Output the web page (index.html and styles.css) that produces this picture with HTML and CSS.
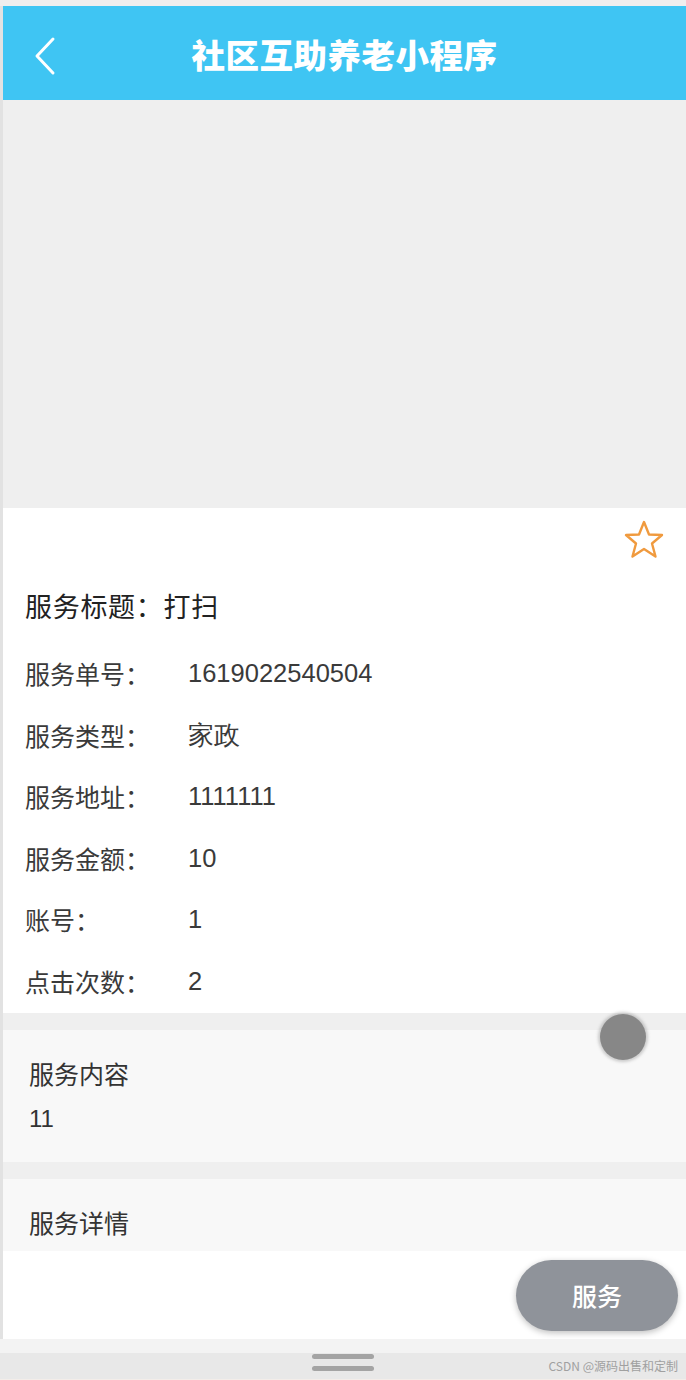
FILE: index.html
```html
<!doctype html>
<html>
<head>
<meta charset="UTF-8">
<title>社区互助养老小程序</title>
	<link rel="stylesheet" href="styles.css">
</head>

<body>
	<div class="page">
		<div class="header">
			<svg class="back" width="24" height="40" viewBox="0 0 24 40">
				<polyline points="20,3 4,20 20,37" fill="none" stroke="#ffffff" stroke-width="3" stroke-linecap="round" stroke-linejoin="round"/>
			</svg>
			<h1>社区互助养老小程序</h1>
		</div>

		<div class="banner"></div>

		<div class="info">
			<div class="star-row">
				<svg width="42" height="42" viewBox="0 0 42 42">
					<polygon points="21,3 26,15.5 39,16 29,24.5 32.5,37.5 21,30 9.5,37.5 13,24.5 3,16 16,15.5" fill="none" stroke="#f09a3e" stroke-width="2.4" stroke-linejoin="round"/>
				</svg>
			</div>
			<div class="title">服务标题：打扫</div>
			<div class="row"><span class="label">服务单号：</span><span class="value">1619022540504</span></div>
			<div class="row"><span class="label">服务类型：</span><span class="value">家政</span></div>
			<div class="row"><span class="label">服务地址：</span><span class="value">1111111</span></div>
			<div class="row"><span class="label">服务金额：</span><span class="value">10</span></div>
			<div class="row"><span class="label">账号：</span><span class="value">1</span></div>
			<div class="row"><span class="label">点击次数：</span><span class="value">2</span></div>
		</div>

		<div class="gap"></div>

		<div class="section">
			<div class="section-title">服务内容</div>
			<div class="section-text">11</div>
			<div class="dot"></div>
		</div>

		<div class="gap"></div>

		<div class="section details">
			<div class="section-title">服务详情</div>
		</div>

		<div class="actions">
			<div class="btn">服务</div>
		</div>
	</div>

	<div class="bottom-bar">
		<div class="handle"><span></span><span></span></div>
		<div class="mark">CSDN @源码出售和定制</div>
	</div>
</body>
</html>
```

FILE: styles.css
```css
body {
	margin: 0;
	background-color: #f0eeee;
	font-family: "Liberation Sans", "Noto Sans CJK SC", sans-serif;
	color: #333333;
}

.page {
	margin-top: 6px;
	border-left: 3px solid #e2e2e2;
	display: flex;
	flex-direction: column;
}

.header {
	height: 94px;
	background-color: #3fc5f3;
	display: flex;
	align-items: center;
	position: relative;
}

.back {
	position: absolute;
	left: 30px;
	top: 30px;
}

.header h1 {
	flex: 1;
	margin: 0;
	text-align: center;
	color: #ffffff;
	font-family: "Noto Sans CJK SC", sans-serif;
	font-weight: 900;
	font-size: 33.5px;
	letter-spacing: 0.5px;
}

.banner {
	height: 408px;
	background-color: #efefef;
}

.info {
	background-color: #ffffff;
	padding: 12px 0 0 22px;
}

.star-row {
	display: flex;
	justify-content: flex-end;
	padding-right: 21px;
	height: 40px;
	margin-top: -1px;
}

.title {
	margin-top: 16px;
	height: 68px;
	line-height: 62px;
	font-size: 27px;
	letter-spacing: 0.7px;
	color: #222222;
	font-family: "Noto Sans CJK SC", sans-serif;
}

.row {
	display: flex;
	height: 61.6px;
	line-height: 61.6px;
	font-size: 25px;
	font-family: "Noto Sans CJK SC", sans-serif;
	color: #3a3a3a;
}

.label {
	width: 163px;
}

.value {
	font-family: "Liberation Sans", sans-serif;
	font-size: 25.5px;
}

.gap {
	height: 17px;
	background-color: #efefef;
}

.section {
	background-color: #f8f8f8;
	padding: 26px 26px 26px;
	position: relative;
	font-family: "Noto Sans CJK SC", sans-serif;
	font-size: 25px;
}

.section-title {
	line-height: 34px;
	color: #333333;
}

.section-text {
	margin-top: 12px;
	line-height: 34px;
	font-family: "Liberation Sans", sans-serif;
	font-size: 24px;
}

.details {
	padding: 26px 26px 12px;
}

.dot {
	position: absolute;
	left: 597px;
	top: -16px;
	width: 46px;
	height: 46px;
	border-radius: 50%;
	background-color: #878787;
	box-shadow: 0 0 3px 2px rgba(120, 120, 120, 0.35);
}

.actions {
	background-color: #ffffff;
	height: 88px;
	display: flex;
	justify-content: flex-end;
	align-items: flex-start;
	padding-top: 9px;
	padding-right: 8px;
	box-sizing: border-box;
}

.btn {
	width: 162px;
	height: 71px;
	border-radius: 36px;
	background-color: #8f939a;
	color: #ffffff;
	font-family: "Noto Sans CJK SC", sans-serif;
	font-size: 25px;
	font-weight: 500;
	display: flex;
	align-items: center;
	justify-content: center;
	box-shadow: 0 2px 6px rgba(0, 0, 0, 0.25);
}

.bottom-bar {
	height: 42px;
	background: linear-gradient(#f3f3f3 0, #f3f3f3 14px, #e8e8e8 14px, #e8e8e8 40px, #f3ede9 40px);
	position: relative;
	display: flex;
	justify-content: center;
}

.handle {
	display: flex;
	flex-direction: column;
	gap: 7px;
	padding-top: 15px;
}

.handle span {
	display: block;
	width: 62px;
	height: 5px;
	border-radius: 3px;
	background-color: #a4a4a4;
}

.mark {
	position: absolute;
	right: 8px;
	top: 18px;
	font-family: "Noto Sans CJK SC", sans-serif;
	font-size: 12px;
	color: #a0a0a0;
}
```
